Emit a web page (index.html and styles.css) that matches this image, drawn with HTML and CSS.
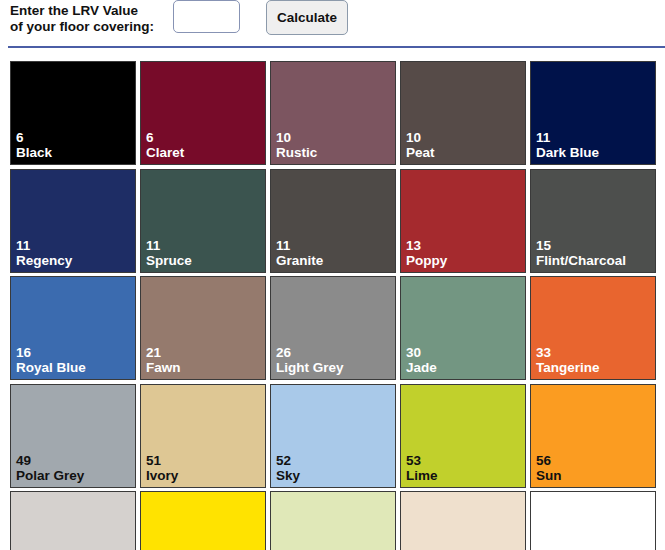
FILE: index.html
```html
<!DOCTYPE html>
<html>
<head>
<meta charset="utf-8">
<link rel="stylesheet" href="styles.css">
</head>
<body>
<div class="header">
  <label class="prompt" for="lrv">Enter the LRV Value<br>of your floor covering:</label>
  <input id="lrv" class="lrv-input" type="text">
  <button class="calc-btn">Calculate</button>
</div>
<div class="rule"></div>
<div class="grid">
  <div class="sw light-text" style="background:#000000"><span>6</span><span>Black</span></div>
  <div class="sw light-text" style="background:#770b29"><span>6</span><span>Claret</span></div>
  <div class="sw light-text" style="background:#7c5560"><span>10</span><span>Rustic</span></div>
  <div class="sw light-text" style="background:#564b48"><span>10</span><span>Peat</span></div>
  <div class="sw light-text" style="background:#00124a"><span>11</span><span>Dark Blue</span></div>

  <div class="sw light-text" style="background:#1e2d65"><span>11</span><span>Regency</span></div>
  <div class="sw light-text" style="background:#3b544f"><span>11</span><span>Spruce</span></div>
  <div class="sw light-text" style="background:#4e4a47"><span>11</span><span>Granite</span></div>
  <div class="sw light-text" style="background:#a52a2e"><span>13</span><span>Poppy</span></div>
  <div class="sw light-text" style="background:#4d4f4d"><span>15</span><span>Flint/Charcoal</span></div>

  <div class="sw light-text" style="background:#3b6baf"><span>16</span><span>Royal Blue</span></div>
  <div class="sw light-text" style="background:#957a6d"><span>21</span><span>Fawn</span></div>
  <div class="sw light-text" style="background:#8b8b8b"><span>26</span><span>Light Grey</span></div>
  <div class="sw light-text" style="background:#739682"><span>30</span><span>Jade</span></div>
  <div class="sw light-text" style="background:#e8652f"><span>33</span><span>Tangerine</span></div>

  <div class="sw dark-text" style="background:#a1a8ae"><span>49</span><span>Polar Grey</span></div>
  <div class="sw dark-text" style="background:#dec794"><span>51</span><span>Ivory</span></div>
  <div class="sw dark-text" style="background:#a9c9e9"><span>52</span><span>Sky</span></div>
  <div class="sw dark-text" style="background:#c1d02c"><span>53</span><span>Lime</span></div>
  <div class="sw dark-text" style="background:#fb9c21"><span>56</span><span>Sun</span></div>

  <div class="sw dark-text" style="background:#d5d1ce"></div>
  <div class="sw dark-text" style="background:#ffe300"></div>
  <div class="sw dark-text" style="background:#e0e8b8"></div>
  <div class="sw dark-text" style="background:#efe0cd"></div>
  <div class="sw dark-text" style="background:#ffffff"></div>
</div>
</body>
</html>
```

FILE: styles.css
```css
html, body {
  margin: 0;
  padding: 0;
  background: #ffffff;
  overflow: hidden;
}
body {
  font-family: "Liberation Sans", Arial, sans-serif;
  width: 665px;
}
.header {
  display: flex;
  align-items: flex-start;
  padding-left: 10px;
  height: 46px;
}
.prompt {
  font-size: 13.5px;
  font-weight: bold;
  line-height: 15.5px;
  color: #111;
  padding-top: 3px;
  width: 163px;
}
.lrv-input {
  box-sizing: border-box;
  width: 67px;
  height: 33px;
  margin: 0;
  border: 1px solid #8793b4;
  border-radius: 5px;
  background: #fff;
  outline: none;
}
.calc-btn {
  box-sizing: border-box;
  margin: 0 0 0 26px;
  width: 82px;
  height: 35px;
  border: 1px solid #8c9aab;
  border-radius: 5px;
  background: #efefef;
  font-family: "Liberation Sans", Arial, sans-serif;
  font-size: 13.5px;
  font-weight: bold;
  color: #111;
  padding: 0;
}
.rule {
  margin-left: 8px;
  height: 2px;
  background: #4b5ea6;
}
.grid {
  display: grid;
  grid-template-columns: repeat(5, 126px);
  grid-auto-rows: 104px;
  column-gap: 4px;
  row-gap: 3.5px;
  padding: 13px 0 0 10px;
}
.sw {
  box-sizing: border-box;
  border: 1px solid #3a3a3a;
  display: flex;
  flex-direction: column;
  justify-content: flex-end;
  padding: 0 0 4px 5px;
  font-size: 13.5px;
  font-weight: bold;
  line-height: 15px;
}
.light-text { color: #ffffff; }
.dark-text { color: #111111; }
```
